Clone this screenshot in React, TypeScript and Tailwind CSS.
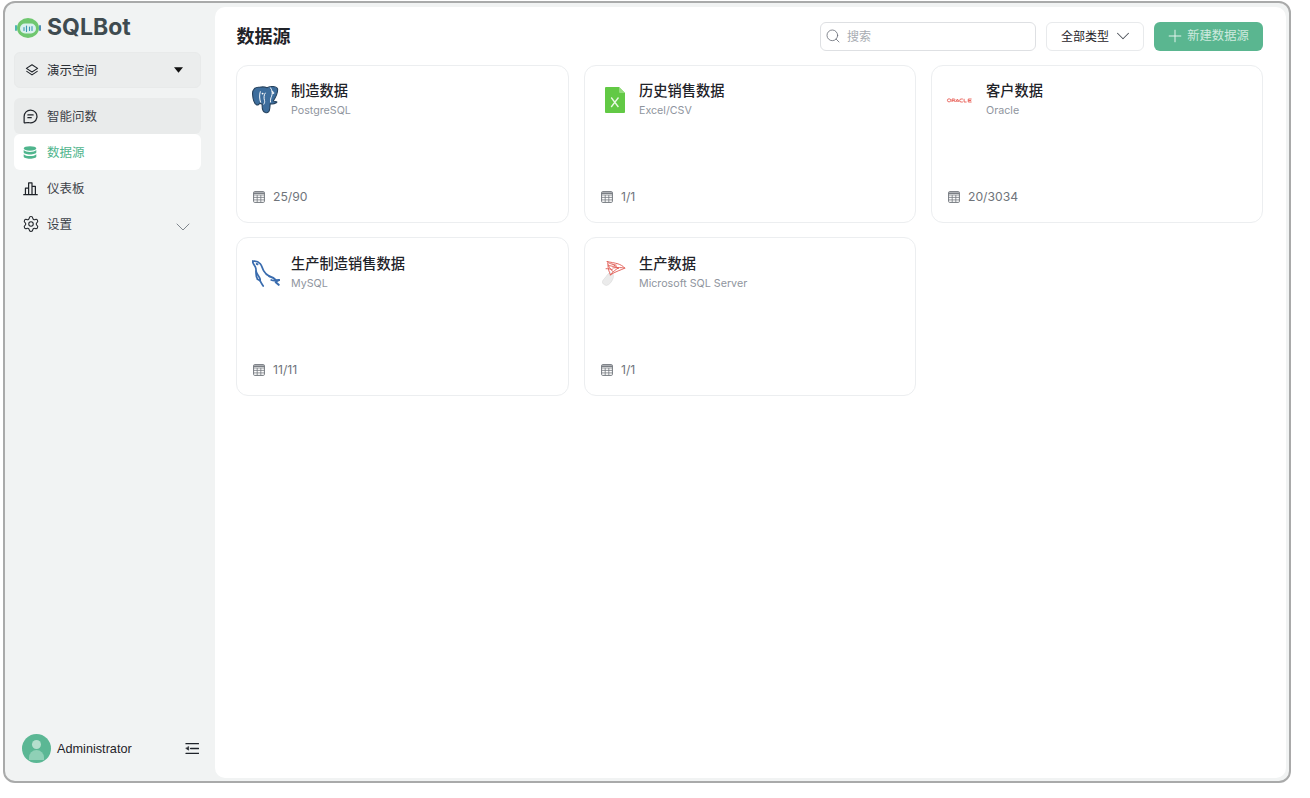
import React from "react";
import { Search, ChevronDown, Plus, Settings } from "lucide-react";

function Logo() {
  return (
    <svg width="28" height="24" viewBox="0 0 28 24" fill="none">
      <rect x="1" y="9" width="2" height="6" rx="1" fill="#4fb7b0" />
      <rect x="25" y="9" width="2" height="6" rx="1" fill="#4f8fb7" />
      <ellipse cx="14" cy="12" rx="11" ry="10" fill="url(#lg)" />
      <rect x="6" y="7.5" width="16" height="10" rx="5" fill="#d9f0ee" />
      <path d="M10 11.5v3M12.5 10v5.5M15.5 11v3.5M18 10.5v4" stroke="#3d97b3" strokeWidth="1.1" strokeLinecap="round" />
      <defs>
        <linearGradient id="lg" x1="8" y1="2" x2="20" y2="22">
          <stop stopColor="#6fc76f" />
          <stop offset="1" stopColor="#2a9fc0" />
        </linearGradient>
      </defs>
    </svg>
  );
}

function LayersIcon() {
  return (
    <svg width="14" height="14" viewBox="0 0 14 14" fill="none" stroke="#1f2329" strokeWidth="1.1" strokeLinejoin="round" strokeLinecap="round">
      <path d="M7 1.8 12.6 5.4 7 9 1.4 5.4Z" />
      <path d="M1.8 8.4 7 11.9l5.2-3.5" />
    </svg>
  );
}

function ChatIcon() {
  return (
    <svg width="15" height="15" viewBox="0 0 16 16" fill="none" stroke="#1f2329" strokeWidth="1.3" strokeLinecap="round" strokeLinejoin="round">
      <path d="M8.2 1.2a6.8 6.8 0 1 1-2.4 13.2L2 14.8c-.5 0-.8-.3-.8-.7V8a6.8 6.8 0 0 1 7-6.8Z" />
      <path d="M5.2 6.3h5.6M5.2 9.3h3.6" />
    </svg>
  );
}

function DbIcon() {
  return (
    <svg width="14" height="13" viewBox="0 0 15 14" fill="#4fb58d">
      <ellipse cx="7.5" cy="2.6" rx="6.8" ry="2.4" />
      <path d="M.7 4.4c1.2 1.3 3.8 2 6.8 2s5.600-.7 6.800-2v2.300c0 1.400-3 2.400-6.800 2.400S.7 8.100.7 6.700Z" />
      <path d="M.7 8.800c1.200 1.300 3.800 2 6.800 2s5.600-.7 6.800-2v2.500c0 1.400-3 2.400-6.800 2.400S.7 12.700.7 11.300Z" />
    </svg>
  );
}

function ChartIcon() {
  return (
    <svg width="15" height="15" viewBox="0 0 16 16" fill="none" stroke="#1f2329" strokeWidth="1.3">
      <path d="M.8 14.600h14.400" strokeLinecap="round" />
      <path d="M2.600 14.600V7.600h3.400v7M6 14.600V2h3.600v12.600M9.600 14.600V5.800h3.600v8.800" strokeLinejoin="round" />
    </svg>
  );
}

function TableIcon() {
  return (
    <svg width="12" height="12" viewBox="0 0 12 12" fill="none" stroke="#74797f" strokeWidth="1">
      <rect x="0.6" y="0.6" width="10.800" height="10.800" rx="1" />
      <path d="M.6 4h10.800M.6 6.400h10.800M.6 8.900h10.800M4.200 4v7.400M7.800 4v7.400" strokeWidth="0.8" />
      <path d="M.6 2.200h10.800" strokeWidth="1.500" />
    </svg>
  );
}

function CollapseIcon() {
  return (
    <svg width="14" height="13" viewBox="0 0 15 14" fill="none" stroke="#1f2329" strokeWidth="1.400" strokeLinecap="round">
      <path d="M1 1.800h13.500M6 7h8.500M1 12.200h13.500" />
      <path d="M3.900 5.200v3.600L1 7Z" fill="#1f2329" strokeWidth="0.6" strokeLinejoin="round" />
    </svg>
  );
}

function Postgres() {
  return (
    <svg width="27" height="28" viewBox="1 1.300 25.500 26.500" fill="none">
      <path d="M8 2.500C4 2 1.200 4.600 1.500 9c.2 3.600 1.600 8.600 3.600 10 1.400 1 2.500-.3 3.400-1.600.8.700 1.500 1 2.100 1-.2 3 .1 7 3 8 2.500.8 4-1 4.200-4 .1-1 .3-3 .4-4.400 1.600.6 3.800.3 5.800-.8 1-.6.400-1.200-.8-1.100-1 .1-1.700-.2-2-.8 2.500-3.800 4.300-8.500 4-11.300C24.800 2.600 22 1.500 19 1.800c-1.500.1-2.800.5-3.800 1.100C13.500 2.200 11 1.800 8 2.500Z" fill="#3d6d9c" stroke="#24405c" strokeWidth="1" strokeLinejoin="round" />
      <path d="M13.500 8c-1.500 2-1.300 5-.7 7 .4 1.500 0 2.500-.6 3.500M8.800 6.700c-1 3-.800 7 .3 10M18.500 3c2 2.500 2 5.500 1 8-.8 1.800-1.300 3.500-1 5.500M20 6.500c1.500 0 1.800.8 1.500 2" stroke="#fff" strokeWidth="0.9" strokeLinecap="round" />
      <circle cx="11" cy="8.500" r="0.9" fill="#fff" />
      <circle cx="20.500" cy="8" r="0.7" fill="#fff" />
    </svg>
  );
}

function Excel() {
  return (
    <svg width="20" height="26" viewBox="0 0 20 26">
      <path d="M1 0h13l6 6v19a1 1 0 0 1-1 1H1a1 1 0 0 1-1-1V1a1 1 0 0 1 1-1Z" fill="#62c945" />
      <path d="M14 0l6 6h-5a1 1 0 0 1-1-1Z" fill="#94dc7d" />
      <path d="M6.200 10.500l7.200 9.500M13.500 10.500l-7.300 9.500" stroke="#e9f9e4" strokeWidth="1.300" />
    </svg>
  );
}

function Mysql() {
  return (
    <svg width="28" height="27" viewBox="1 1.500 27.500 25.500" fill="none" stroke="#3a6cae" strokeWidth="1.700" strokeLinecap="round" strokeLinejoin="round">
      <path d="M1.500 2.200c3.400-.6 5.800.4 7.600 2.500 1.700 2 2 4.400 3.400 7 1.300 2.400 3.200 4.100 5.600 5.300" />
      <path d="M1.500 2.200c.4 2.600 1.800 4.100 2.800 5.600.9 1.500.8 3.500.7 5.600-.1 2.200.2 4.400 1.400 6.400" />
      <path d="M5 12c.8 3 2.200 4.300 3.400 6.300.7 1.200 1.100 2.200.7 3.100L6.400 20" />
      <path d="M9 21.500c.5 1 1.300 2.500 3 5" />
      <path d="M18 17c2.200.5 4.600 1.300 6.700 4l3-.4c-1.300.3-2.700 1.200-3.400 2.200l2.900 2.600" strokeWidth="2" />
      <path d="M24.500 21c-1.500.3-3 .2-4.600-.4" />
      <path d="M5.500 4.800l1 .5" />
    </svg>
  );
}

function Sqlserver() {
  return (
    <svg width="24" height="25" viewBox="1 1 24.500 26" fill="none">
      <path d="M5.500 26.500c-2.800-.6-4.600-2.200-4.300-4 .3-1.800 2.200-3 3.900-5.400 1-1.500 2.200-3.300 4.600-4.600 2.400 1.800 4 3.400 2.400 7-1.300 3-3.200 6.200-6.600 7Z" fill="#ebebeb" stroke="#d8d8d8" strokeWidth="0.6" />
      <path d="M6 1.500c3 .8 8 1.400 11.500 2.500 2 .7 5.500 2.300 7 4.400-3.500 1.800-10 3.600-15 7M6 1.500c1.400 2 5.500 3 9.500 3.800M6.600 3c.3 3.500 2.900 6.300 5.400 9M8 5.800c3 .3 6.600 1.300 9.600 2.700M24.500 8.400c-3.300-.8-7.600-.7-12.500-.2M7 5c-.2 3.800 1.200 7 2.500 10.400M9.500 15.400c2.500-2.500 5-5.500 8-7M12 4.500c2 1.500 4 2.500 6 4M5 9c2 0 4 0 6.500 1" stroke="#e2635c" strokeWidth="1" strokeLinecap="round" />
    </svg>
  );
}

function Oracle() {
  return (
    <svg width="29" height="5" viewBox="0 0 30 6" fill="none" stroke="#ea6a62" strokeWidth="1.200">
      <rect x="0.500" y="1" width="4" height="3.600" rx="1.800" />
      <path d="M6 4.800V1.200h2.600a1 1 0 0 1 0 2H6M8.600 3.200 10 4.800" />
      <path d="M10.500 4.800 12.500 1.200 14.500 4.800M11.500 3.800h2" />
      <path d="M19 1.200h-2a1.800 1.800 0 0 0 0 3.600h2" />
      <path d="M20.500 1v3.800h3" />
      <path d="M29.500 1.200h-4v3.600h4M25.500 3h3.500" />
    </svg>
  );
}

const navBase = "flex h-[36px] items-center rounded-[6px] pl-[9px] text-[12.5px]";

function Card({ icon, title, sub, count, tall, iconClass }: { icon: React.ReactNode; title: string; sub: string; count: string; tall?: boolean; iconClass?: string }) {
  return (
    <div className={`flex flex-col justify-between rounded-[12px] border border-[#eceef0] bg-white pl-[15px] ${tall ? "h-[159px] pt-[16px] pb-[17px]" : "h-[158px] pt-[15px] pb-[17px]"}`}>
      <div className="flex">
        <div className={`flex h-[38px] w-[30px] items-center justify-center ${iconClass ?? ""}`}>{icon}</div>
        <div className="ml-[9px] flex flex-col">
          <div className="text-[14.25px] leading-[20px] font-medium text-[#1f2329]">{title}</div>
          <div className="mt-[1px] text-[10.7px] leading-[18px] text-[#8f959e]">{sub}</div>
        </div>
      </div>
      <div className="flex items-center gap-[8px] pl-[1px] text-[12.2px] leading-[16px] text-[#6f747b]">
        <TableIcon />
        <span>{count}</span>
      </div>
    </div>
  );
}

export default function App() {
  return (
    <div className="h-[798px] w-[1310px] overflow-hidden bg-white pt-[1px] pl-[3px] font-['Inter','Noto_Sans_CJK_SC',sans-serif]">
      <div className="flex h-[782px] w-[1288px] rounded-[12px] border-[2px] border-[#a9aaaa] bg-[#f1f3f3]">
        <aside className="flex w-[210px] flex-col pr-[14px] pl-[9px]">
          <div className="flex h-[49px] items-center">
            <Logo />
            <span className="ml-[5px] text-[23px] leading-none font-bold text-[#3f4b50]">SQLBot</span>
          </div>
          <div className="flex h-[36px] items-center rounded-[6px] border border-[#e8eaea] bg-[#ebeded] pr-[17px] pl-[10px]">
            <LayersIcon />
            <span className="mt-[2px] ml-[8px] flex-1 text-[12.5px] text-[#2b3036]">演示空间</span>
            <svg width="9" height="6" viewBox="0 0 10 6"><path d="M0 0h10L5 6Z" fill="#111" /></svg>
          </div>
          <nav className="mt-[10px] flex flex-col text-[#3d4248]">
            <div className={`${navBase} bg-[#e9ebeb]`}><ChatIcon /><span className="mt-[2px] ml-[9px]">智能问数</span></div>
            <div className={`${navBase} bg-white text-[#4fb58d]`}><DbIcon /><span className="mt-[2px] ml-[10px]">数据源</span></div>
            <div className={navBase}><ChartIcon /><span className="mt-[2px] ml-[9px]">仪表板</span></div>
            <div className={navBase}>
              <Settings size={18} strokeWidth={1.400} color="#1f2329" className="-ml-[1.5px]" />
              <span className="mt-[2px] ml-[7.5px] flex-1">设置</span>
              <ChevronDown size={24} strokeWidth={1} color="#80868d" className="mt-[5px] mr-[6px]" />
            </div>
          </nav>
          <div className="mt-auto mb-[18px] flex items-center pl-[8px]">
            <div className="relative h-[29px] w-[29px] overflow-hidden rounded-full bg-[#5bb794]">
              <div className="absolute top-[6px] left-[10px] h-[9px] w-[9px] rounded-full bg-[#b5dfcd]" />
              <div className="absolute top-[16px] left-[7px] h-[10px] w-[15px] rounded-t-full bg-[#8fd0b6]" />
            </div>
            <span className="mt-[2px] ml-[6px] flex-1 font-['Liberation_Sans',sans-serif] text-[12.7px] text-[#1f2329]">Administrator</span>
            <div className="mr-[2px]"><CollapseIcon /></div>
          </div>
        </aside>
        <main className="mt-[4px] mr-[3px] mb-[3px] flex-1 rounded-[10px] bg-white pr-[23px] pl-[21px]">
          <div className="flex h-[58px] items-center">
            <h1 className="flex-1 pl-[0.5px] text-[18px] font-semibold text-[#1f2329]">数据源</h1>
            <div className="flex h-[29px] w-[216px] items-center rounded-[6px] border border-[#dee0e3] pl-[4px] text-[12px] text-[#a8acb2]">
              <Search size={16} strokeWidth={1.200} color="#646a73" />
              <span className="mt-[1px] ml-[6px]">搜索</span>
            </div>
            <div className="ml-[10px] flex h-[29px] w-[98px] items-center rounded-[6px] border border-[#e8eaec] pl-[14px] text-[12px] text-[#1f2329]">
              <span className="mt-[1px]">全部类型</span>
              <ChevronDown size={22} strokeWidth={1.100} color="#4c5158" className="ml-[2.5px]" />
            </div>
            <div className="ml-[10px] flex h-[29px] w-[109px] items-center justify-center rounded-[6px] bg-[#5ab690] pr-[3px] text-[12.3px] text-[#cfeadf]">
              <Plus size={20} strokeWidth={1.200} color="#e2f3ec" />
              <span className="mt-[1px] ml-[2px]">新建数据源</span>
            </div>
          </div>
          <div className="grid grid-cols-[333px_332px_332px] gap-x-[15px] gap-y-[14px]">
            <Card iconClass="justify-start" icon={<Postgres />} title="制造数据" sub="PostgreSQL" count="25/90" />
            <Card iconClass="pr-[1px]" icon={<Excel />} title="历史销售数据" sub="Excel/CSV" count="1/1" />
            <Card iconClass="-ml-[2px] w-[32px] justify-start" icon={<Oracle />} title="客户数据" sub="Oracle" count="20/3034" />
            <Card tall iconClass="justify-start" icon={<Mysql />} title="生产制造销售数据" sub="MySQL" count="11/11" />
            <Card tall iconClass="justify-start pl-[2px]" icon={<Sqlserver />} title="生产数据" sub="Microsoft SQL Server" count="1/1" />
          </div>
        </main>
      </div>
    </div>
  );
}
